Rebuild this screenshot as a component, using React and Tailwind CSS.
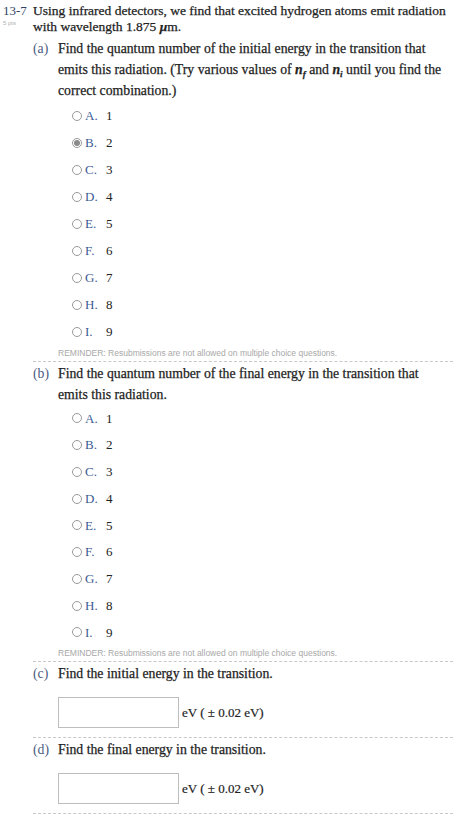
import React from "react";

const serif = { fontFamily: '"Liberation Serif", "Times New Roman", serif' };

function Radio({ checked }) {
  return (
    <span className="inline-flex h-[10px] w-[10px] items-center justify-center rounded-full border border-[#9a9a9a] bg-white">
      {checked && <span className="h-[6px] w-[6px] rounded-full bg-[#8a8a8a]" />}
    </span>
  );
}

function Options({ selected, top, row }) {
  const opts = ["A", "B", "C", "D", "E", "F", "G", "H", "I"];
  return (
    <div className={`flex flex-col pl-[14px] ${top}`}>
      {opts.map((o, i) => (
        <div key={o} className={`flex items-center text-[13px] ${row}`}>
          <Radio checked={selected === i} />
          <span className="ml-[3px] w-[21px] text-[#3c5b95]">{o}.</span>
          <span className="text-[#222]">{i + 1}</span>
        </div>
      ))}
    </div>
  );
}

function Reminder() {
  return (
    <div
      className="text-[8.5px] leading-[12px] text-[#a8a8a8]"
      style={{ fontFamily: '"Liberation Sans", Arial, sans-serif' }}
    >
      REMINDER: Resubmissions are not allowed on multiple choice questions.
    </div>
  );
}

function Part({ label, children }) {
  return (
    <div className="flex">
      <div className="w-[25px] shrink-0 text-[#4a5b82]">{label}</div>
      <div className="flex-1">{children}</div>
    </div>
  );
}

function Answer() {
  return (
    <div className="flex items-center">
      <div className="h-[31px] w-[121px] border border-[#bdbdbd] bg-white" />
      <span className="ml-[3px] text-[13px] text-[#222] [-webkit-text-stroke:0.2px_#222]">
        eV ( ± 0.02 eV)
      </span>
    </div>
  );
}

const strong = "[-webkit-text-stroke:0.25px_#222]";

function Var({ s }) {
  return (
    <i className="font-bold">
      n<span className="relative top-[3px] text-[9px] leading-none">{s}</span>
    </i>
  );
}

export default function App() {
  return (
    <div className="min-h-[818px] w-[453px] bg-white text-[#222]" style={serif}>
      <div className="flex pt-[3px]">
        <div className="w-[33px] shrink-0 pl-[3px]">
          <div className="text-[13px] leading-[16px] text-[#2e3f63]">13-7</div>
          <div
            className="text-[6px] leading-[8px] text-[#b0b0b0]"
            style={{ fontFamily: '"Liberation Sans", Arial, sans-serif' }}
          >
            5 pts
          </div>
        </div>
        <div className="flex-1">
          <div className={`text-[13.5px] leading-[15.5px] ${strong}`}>
            <div className="whitespace-nowrap">
              Using infrared detectors, we find that excited hydrogen atoms emit radiation
            </div>
            <div>
              with wavelength 1.875 <i className="font-bold">μ</i>m.
            </div>
          </div>

          <div className="mt-[4px] text-[13.75px] leading-[21px]">
            <Part label="(a)">
              <div className={strong}>
                <div className="whitespace-nowrap">
                  Find the quantum number of the initial energy in the transition that
                </div>
                <div className="whitespace-nowrap">
                  emits this radiation. (Try various values of <Var s="f" /> and <Var s="i" /> until you find the
                </div>
                <div>correct combination.)</div>
              </div>
            </Part>
          </div>
          <div className="pl-[25px]">
            <Options selected={1} top="mt-[1px]" row="h-[27px]" />
            <div className="mt-[1.5px]">
              <Reminder />
            </div>
          </div>

          <div className="mt-[2px] border-t border-dashed border-[#c8c8c8] pt-[1.5px] text-[13.75px] leading-[21px]">
            <Part label="(b)">
              <div className={strong}>
                <div className="whitespace-nowrap">
                  Find the quantum number of the final energy in the transition that
                </div>
                <div>emits this radiation.</div>
              </div>
            </Part>
          </div>
          <div className="pl-[25px]">
            <Options selected={-1} top="mt-0" row="h-[26.75px]" />
            <div className="mt-[1.5px]">
              <Reminder />
            </div>
          </div>

          <div className="mt-[2px] border-t border-dashed border-[#c8c8c8] pt-[0.5px] text-[13.75px] leading-[21px]">
            <Part label="(c)">
              <div className={strong}>Find the initial energy in the transition.</div>
              <div className="mt-[13.5px]">
                <Answer />
              </div>
            </Part>
          </div>

          <div className="mt-[9px] border-t border-dashed border-[#c8c8c8] pt-[0.5px] text-[13.75px] leading-[21px]">
            <Part label="(d)">
              <div className={strong}>Find the final energy in the transition.</div>
              <div className="mt-[13.5px]">
                <Answer />
              </div>
            </Part>
          </div>
          <div className="mt-[9px] border-t border-dashed border-[#c8c8c8]" />
        </div>
      </div>
    </div>
  );
}
